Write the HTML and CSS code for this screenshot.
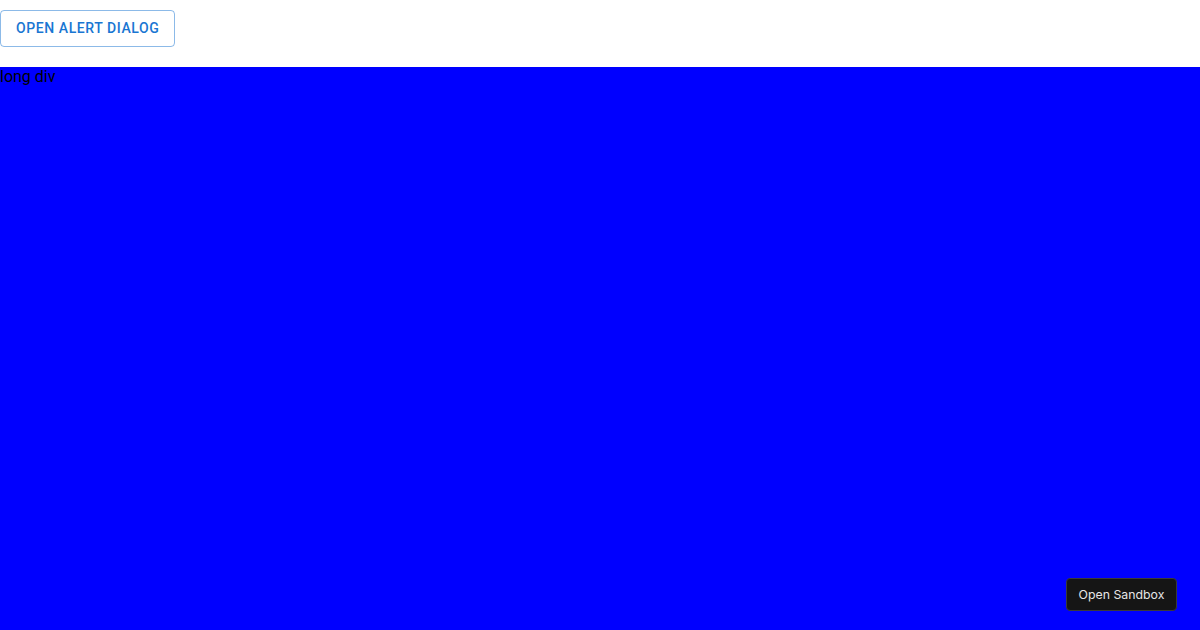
FILE: index.html
```html
<!DOCTYPE html>
<html>
<head>
<meta charset="utf-8">
<link rel="stylesheet" href="styles.css">
</head>
<body>
<div class="page">
  <button class="btn-outlined">Open alert dialog</button>
  <div class="long">long div</div>
</div>
<button class="sandbox">Open Sandbox</button>
</body>
</html>
```
FILE: styles.css
```css
html, body {
  margin: 0;
  padding: 0;
  background: #fff;
  overflow: hidden;
}
.page {
  display: flex;
  flex-direction: column;
  align-items: flex-start;
  padding-top: 10px;
  height: 630px;
  box-sizing: border-box;
}
.btn-outlined {
  font-family: Roboto, "Liberation Sans", sans-serif;
  font-weight: 500;
  font-size: 14px;
  line-height: 1.75;
  letter-spacing: 0.58px;
  text-transform: uppercase;
  color: #1976d2;
  background: transparent;
  border: 1px solid rgba(25, 118, 210, 0.5);
  border-radius: 4px;
  padding: 5px 15px;
  min-width: 64px;
  height: 37px;
  margin: 0;
  cursor: pointer;
}
.long {
  margin-top: 20px;
  width: 100%;
  flex: 1;
  background: #0000ff;
  color: #000;
  font-family: Roboto, "Liberation Sans", sans-serif;
  font-size: 16px;
  line-height: 19px;
}
.sandbox {
  position: fixed;
  right: 23px;
  bottom: 19px;
  width: 111px;
  height: 33px;
  background: #151515;
  color: #e6e6e6;
  border: 1px solid #3a3a3a;
  border-radius: 4px;
  font-family: Inter, "Liberation Sans", sans-serif;
  font-size: 12.3px;
  padding: 0;
  cursor: pointer;
}
```
